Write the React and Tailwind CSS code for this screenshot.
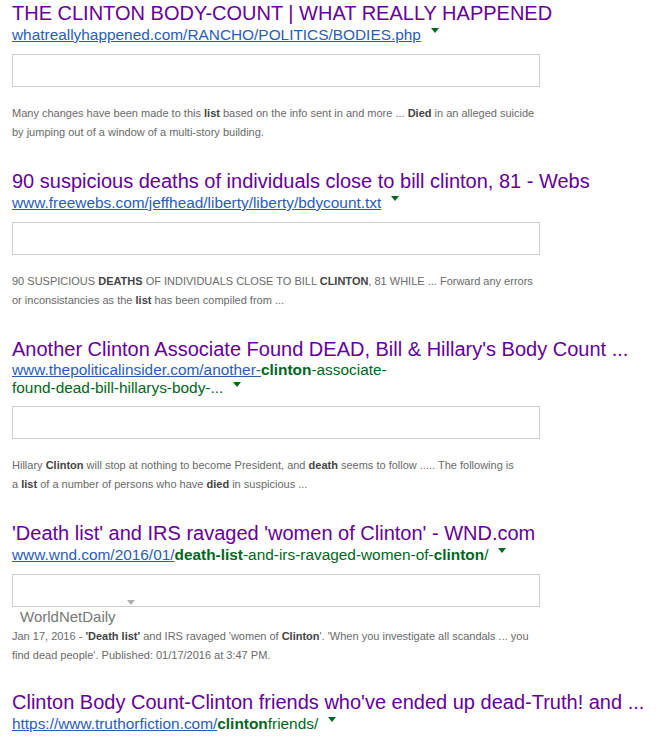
import React from 'react';

const font = { fontFamily: '"Liberation Sans", Arial, sans-serif' };

const Caret = () => (
  <span className="inline-block align-top ml-[10px] mt-[3px] w-0 h-0 border-l-[4px] border-r-[4px] border-t-[5px] border-l-transparent border-r-transparent border-t-[#006621]" />
);

const B = ({ children }) => <b className="font-bold text-[#444]">{children}</b>;
const G = ({ children }) => <b className="font-bold">{children}</b>;

const results = [
  {
    title: 'THE CLINTON BODY-COUNT | WHAT REALLY HAPPENED',
    url: <span className="underline text-[#2a5db8]">whatreallyhappened.com/RANCHO/POLITICS/BODIES.php</span>,
    snippet: (
      <>
        Many changes have been made to this <B>list</B> based on the info sent in and more ... <B>Died</B> in an alleged suicide by jumping out of a window of a multi-story building.
      </>
    ),
  },
  {
    title: '90 suspicious deaths of individuals close to bill clinton, 81 - Webs',
    url: <span className="underline text-[#2a5db8]">www.freewebs.com/jeffhead/liberty/liberty/bdycount.txt</span>,
    snippet: (
      <>
        90 SUSPICIOUS <B>DEATHS</B> OF INDIVIDUALS CLOSE TO BILL <B>CLINTON</B>, 81 WHILE ... Forward any errors or inconsistancies as the <B>list</B> has been compiled from ...
      </>
    ),
  },
  {
    title: "Another Clinton Associate Found DEAD, Bill & Hillary's Body Count ...",
    urlLeading: 'leading-[18px]',
    url: (
      <>
        <span className="underline text-[#2a5db8]">www.thepoliticalinsider.com/another-</span>
        <G>clinton</G>-associate-
        <br />
        found-dead-bill-hillarys-body-...
      </>
    ),
    snippet: (
      <>
        Hillary <B>Clinton</B> will stop at nothing to become President, and <B>death</B> seems to follow ..... The following is
        <br />a <B>list</B> of a number of persons who have <B>died</B> in suspicious ...
      </>
    ),
  },
  {
    title: "'Death list' and IRS ravaged 'women of Clinton' - WND.com",
    url: (
      <>
        <span className="underline text-[#2a5db8]">www.wnd.com/2016/01/</span>
        <G>death-list</G>-and-irs-ravaged-women-of-<G>clinton</G>/
      </>
    ),
    source: 'WorldNetDaily',
    snippet: (
      <>
        Jan 17, 2016 - <B>'Death list'</B> and IRS ravaged 'women of <B>Clinton</B>'. 'When you investigate all scandals ... you find dead people'. Published: 01/17/2016 at 3:47 PM.
      </>
    ),
  },
  {
    title: "Clinton Body Count-Clinton friends who've ended up dead-Truth! and ...",
    url: (
      <>
        <span className="underline text-[#2a5db8]">https://www.truthorfiction.com/</span>
        <G>clinton</G>friends/
      </>
    ),
    last: true,
  },
];

const Result = ({ r }) => (
  <div className={r.source ? 'mb-[25px]' : 'mb-[27px]'}>
    <div className="text-[20px] leading-[24px] text-[#660099] whitespace-nowrap">{r.title}</div>
    <div className={`text-[15.4px] ${r.urlLeading || 'leading-[20px]'} text-[#006621] whitespace-nowrap`}>
      {r.url}
      <Caret />
    </div>
    {!r.last && (
      <>
        <div className="relative mt-[9px] w-[528px] h-[33px] border border-[#cfcfcf]">
          {r.source && (
            <span className="absolute left-[114px] bottom-[1px] w-0 h-0 border-l-[4px] border-r-[4px] border-t-[5px] border-l-transparent border-r-transparent border-t-[#b0b0b0]" />
          )}
        </div>
        {r.source && <div className="pl-[8px] text-[15px] leading-[20px] text-[#777]">{r.source}</div>}
        <div className={`${r.source ? 'mt-0' : 'mt-[17px]'} w-[528px] text-[11px] leading-[19px] text-[#6a6a6a]`}>{r.snippet}</div>
      </>
    )}
  </div>
);

export default function App() {
  return (
    <div className="min-h-screen bg-white pl-[12px] pt-[1px] overflow-hidden" style={font}>
      {results.map((r, i) => (
        <Result key={i} r={r} />
      ))}
    </div>
  );
}
